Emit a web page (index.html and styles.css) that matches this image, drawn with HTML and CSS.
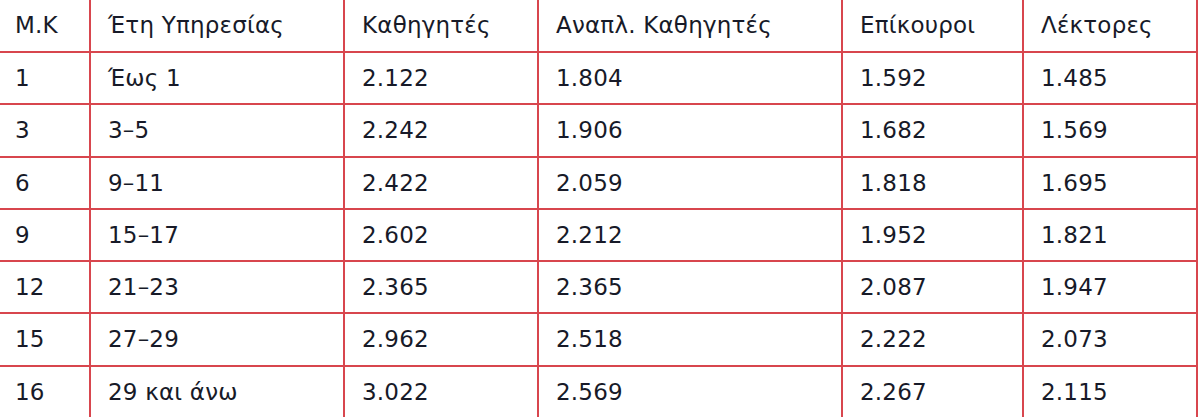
FILE: index.html
```html
<!DOCTYPE html>
<html lang="el">
<head>
<meta charset="utf-8">
<link rel="stylesheet" href="styles.css">
</head>
<body>
<table class="pay">
  <colgroup>
    <col class="c1"><col class="c2"><col class="c3"><col class="c4"><col class="c5"><col class="c6">
  </colgroup>
  <thead>
    <tr><th>Μ.Κ</th><th>Έτη Υπηρεσίας</th><th>Καθηγητές</th><th>Αναπλ. Καθηγητές</th><th>Επίκουροι</th><th>Λέκτορες</th></tr>
  </thead>
  <tbody>
    <tr><td>1</td><td>Έως 1</td><td>2.122</td><td>1.804</td><td>1.592</td><td>1.485</td></tr>
    <tr><td>3</td><td>3–5</td><td>2.242</td><td>1.906</td><td>1.682</td><td>1.569</td></tr>
    <tr><td>6</td><td>9–11</td><td>2.422</td><td>2.059</td><td>1.818</td><td>1.695</td></tr>
    <tr><td>9</td><td>15–17</td><td>2.602</td><td>2.212</td><td>1.952</td><td>1.821</td></tr>
    <tr><td>12</td><td>21–23</td><td>2.365</td><td>2.365</td><td>2.087</td><td>1.947</td></tr>
    <tr><td>15</td><td>27–29</td><td>2.962</td><td>2.518</td><td>2.222</td><td>2.073</td></tr>
    <tr><td>16</td><td>29 και άνω</td><td>3.022</td><td>2.569</td><td>2.267</td><td>2.115</td></tr>
  </tbody>
</table>
</body>
</html>
```

FILE: styles.css
```css
html, body {
  margin: 0;
  padding: 0;
  background: #ffffff;
  overflow: hidden;
}

.pay {
  border-collapse: separate;
  border-spacing: 0;
  table-layout: fixed;
  width: 1198px;
  font-family: "DejaVu Sans", Verdana, sans-serif;
  font-size: 23px;
  line-height: 26px;
  letter-spacing: 0.2px;
  color: #171a28;
}

.c1 { width: 91px; }
.c2 { width: 254px; }
.c3 { width: 194px; }
.c4 { width: 304px; }
.c5 { width: 181px; }
.c6 { width: 174px; }

.pay th,
.pay td {
  box-sizing: border-box;
  text-align: left;
  font-weight: normal;
  border-right: 2px solid #d8464e;
  border-bottom: 2px solid #d8464e;
  padding: 12px 6px 12px 17px;
  height: 52.3px;
  white-space: nowrap;
  vertical-align: top;
}

.pay th {
  height: 53px;
  padding-bottom: 13px;
}

.pay tbody tr:last-child td {
  height: 58px;
}

.pay th:first-child,
.pay td:first-child {
  padding-left: 15px;
}
```
